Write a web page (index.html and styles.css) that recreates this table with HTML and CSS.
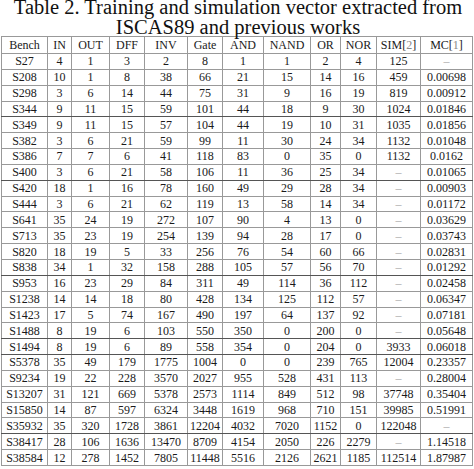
FILE: index.html
```html
<!DOCTYPE html>
<html>
<head>
<meta charset="utf-8">
<link rel="stylesheet" href="styles.css">
</head>
<body>
<div class="caption">Table 2. Training and simulation vector extracted from<br>ISCAS89 and previous works</div>
<table class="data">
<colgroup>
<col class="c-bench"><col class="c-in"><col class="c-out"><col class="c-dff"><col class="c-inv"><col class="c-gate"><col class="c-and"><col class="c-nand"><col class="c-or"><col class="c-nor"><col class="c-sim"><col class="c-mc">
</colgroup>
<thead>
<tr><th>Bench</th><th>IN</th><th>OUT</th><th>DFF</th><th>INV</th><th>Gate</th><th>AND</th><th>NAND</th><th>OR</th><th>NOR</th><th>SIM[<span class="ref">2</span>]</th><th>MC[<span class="ref">1</span>]</th></tr>
</thead>
<tbody>
<tr><td>S27</td><td>4</td><td>1</td><td>3</td><td>2</td><td>8</td><td>1</td><td>1</td><td>2</td><td>4</td><td>125</td><td class="na">–</td></tr>
<tr><td>S208</td><td>10</td><td>1</td><td>8</td><td>38</td><td>66</td><td>21</td><td>15</td><td>14</td><td>16</td><td>459</td><td>0.00698</td></tr>
<tr><td>S298</td><td>3</td><td>6</td><td>14</td><td>44</td><td>75</td><td>31</td><td>9</td><td>16</td><td>19</td><td>819</td><td>0.00912</td></tr>
<tr class="dk"><td>S344</td><td>9</td><td>11</td><td>15</td><td>59</td><td>101</td><td>44</td><td>18</td><td>9</td><td>30</td><td>1024</td><td>0.01846</td></tr>
<tr><td>S349</td><td>9</td><td>11</td><td>15</td><td>57</td><td>104</td><td>44</td><td>19</td><td>10</td><td>31</td><td>1035</td><td>0.01856</td></tr>
<tr><td>S382</td><td>3</td><td>6</td><td>21</td><td>59</td><td>99</td><td>11</td><td>30</td><td>24</td><td>34</td><td>1132</td><td>0.01048</td></tr>
<tr><td>S386</td><td>7</td><td>7</td><td>6</td><td>41</td><td>118</td><td>83</td><td>0</td><td>35</td><td>0</td><td>1132</td><td>0.0162</td></tr>
<tr class="dk"><td>S400</td><td>3</td><td>6</td><td>21</td><td>58</td><td>106</td><td>11</td><td>36</td><td>25</td><td>34</td><td class="na">–</td><td>0.01065</td></tr>
<tr><td>S420</td><td>18</td><td>1</td><td>16</td><td>78</td><td>160</td><td>49</td><td>29</td><td>28</td><td>34</td><td class="na">–</td><td>0.00903</td></tr>
<tr><td>S444</td><td>3</td><td>6</td><td>21</td><td>62</td><td>119</td><td>13</td><td>58</td><td>14</td><td>34</td><td class="na">–</td><td>0.01172</td></tr>
<tr><td>S641</td><td>35</td><td>24</td><td>19</td><td>272</td><td>107</td><td>90</td><td>4</td><td>13</td><td>0</td><td class="na">–</td><td>0.03629</td></tr>
<tr><td>S713</td><td>35</td><td>23</td><td>19</td><td>254</td><td>139</td><td>94</td><td>28</td><td>17</td><td>0</td><td class="na">–</td><td>0.03743</td></tr>
<tr><td>S820</td><td>18</td><td>19</td><td>5</td><td>33</td><td>256</td><td>76</td><td>54</td><td>60</td><td>66</td><td class="na">–</td><td>0.02831</td></tr>
<tr class="dk"><td>S838</td><td>34</td><td>1</td><td>32</td><td>158</td><td>288</td><td>105</td><td>57</td><td>56</td><td>70</td><td class="na">–</td><td>0.01292</td></tr>
<tr><td>S953</td><td>16</td><td>23</td><td>29</td><td>84</td><td>311</td><td>49</td><td>114</td><td>36</td><td>112</td><td class="na">–</td><td>0.02458</td></tr>
<tr><td>S1238</td><td>14</td><td>14</td><td>18</td><td>80</td><td>428</td><td>134</td><td>125</td><td>112</td><td>57</td><td class="na">–</td><td>0.06347</td></tr>
<tr><td>S1423</td><td>17</td><td>5</td><td>74</td><td>167</td><td>490</td><td>197</td><td>64</td><td>137</td><td>92</td><td class="na">–</td><td>0.07181</td></tr>
<tr class="dk"><td>S1488</td><td>8</td><td>19</td><td>6</td><td>103</td><td>550</td><td>350</td><td>0</td><td>200</td><td>0</td><td class="na">–</td><td>0.05648</td></tr>
<tr class="dk"><td>S1494</td><td>8</td><td>19</td><td>6</td><td>89</td><td>558</td><td>354</td><td>0</td><td>204</td><td>0</td><td>3933</td><td>0.06018</td></tr>
<tr><td>S5378</td><td>35</td><td>49</td><td>179</td><td>1775</td><td>1004</td><td>0</td><td>0</td><td>239</td><td>765</td><td>12004</td><td>0.23357</td></tr>
<tr><td>S9234</td><td>19</td><td>22</td><td>228</td><td>3570</td><td>2027</td><td>955</td><td>528</td><td>431</td><td>113</td><td class="na">–</td><td>0.28004</td></tr>
<tr><td>S13207</td><td>31</td><td>121</td><td>669</td><td>5378</td><td>2573</td><td>1114</td><td>849</td><td>512</td><td>98</td><td>37748</td><td>0.35404</td></tr>
<tr><td>S15850</td><td>14</td><td>87</td><td>597</td><td>6324</td><td>3448</td><td>1619</td><td>968</td><td>710</td><td>151</td><td>39985</td><td>0.51991</td></tr>
<tr class="dk"><td>S35932</td><td>35</td><td>320</td><td>1728</td><td>3861</td><td>12204</td><td>4032</td><td>7020</td><td>1152</td><td>0</td><td>122048</td><td class="na">–</td></tr>
<tr><td>S38417</td><td>28</td><td>106</td><td>1636</td><td>13470</td><td>8709</td><td>4154</td><td>2050</td><td>226</td><td>2279</td><td class="na">–</td><td>1.14518</td></tr>
<tr><td>S38584</td><td>12</td><td>278</td><td>1452</td><td>7805</td><td>11448</td><td>5516</td><td>2126</td><td>2621</td><td>1185</td><td>112514</td><td>1.87987</td></tr>
</tbody>
</table>
</body>
</html>
```
FILE: styles.css
```css
html, body {
  margin: 0;
  padding: 0;
  background: #ffffff;
}
body {
  width: 474px;
  height: 469px;
  overflow: hidden;
}
.caption {
  font-family: "Liberation Serif", "Times New Roman", serif;
  font-size: 20.5px;
  line-height: 19.5px;
  color: #111;
  text-align: center;
  margin-top: -2px;
  height: 38px;
  margin-left: 2px;
}
.data {
  margin-left: 1px;
  border-collapse: collapse;
  table-layout: fixed;
  width: 471px;
  font-family: "Liberation Serif", "Times New Roman", serif;
  font-size: 12px;
  color: #1a1a1a;
  border: 1px solid #8a8a8a;
}
.data th, .data td {
  border: 1px solid #999;
  padding: 0;
  text-align: center;
  font-weight: normal;
  white-space: nowrap;
  line-height: 14px;
}
.data thead tr { height: 17px; }
.data tbody tr { height: 15.85px; }
.data tr.dk td { border-bottom-color: #555; }
.data .na { color: #aaa; }
.ref { color: #888; }
.c-bench { width: 46px; }
.c-in { width: 24px; }
.c-out { width: 38px; }
.c-dff { width: 35px; }
.c-inv { width: 43px; }
.c-gate { width: 35px; }
.c-and { width: 41px; }
.c-nand { width: 47px; }
.c-or { width: 30px; }
.c-nor { width: 36px; }
.c-sim { width: 44px; }
.c-mc { width: 52px; }
```
